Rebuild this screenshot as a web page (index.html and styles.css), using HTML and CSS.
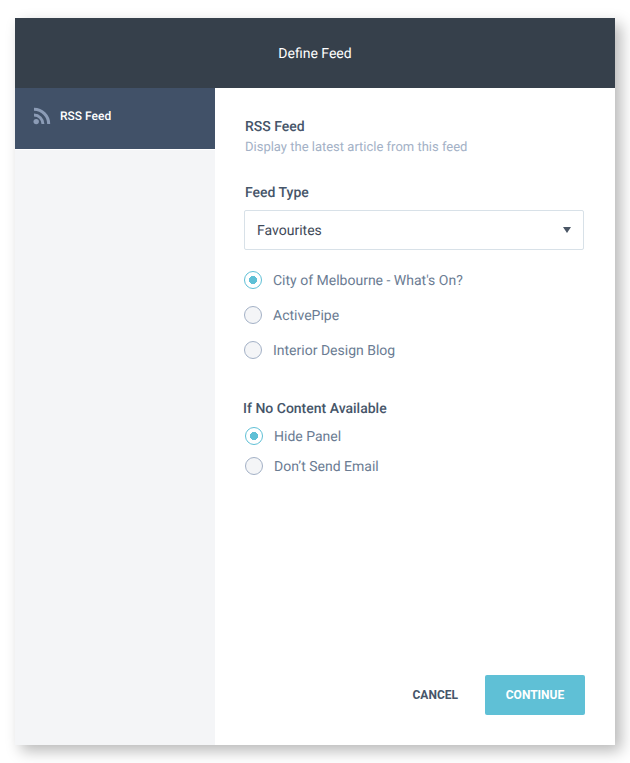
FILE: index.html
```html
<!DOCTYPE html>
<html lang="en">
<head>
<meta charset="utf-8">
<title>Define Feed</title>
<link rel="stylesheet" href="styles.css">
</head>
<body>
<div class="dialog">
  <header class="dialog-header">Define Feed</header>
  <div class="dialog-body">
    <aside class="sidebar">
      <div class="side-item">
        <svg class="rss-icon" width="18" height="18" viewBox="0 0 18 18" aria-hidden="true">
          <circle cx="3.2" cy="14.6" r="2.7" fill="#8c9cb6"/>
          <path d="M1 6.6a10.4 10.4 0 0 1 10.4 10.4h-2.9A7.5 7.5 0 0 0 1 9.5z" fill="#8c9cb6"/>
          <path d="M1 .8A16.2 16.2 0 0 1 17.2 17h-3A13.2 13.2 0 0 0 1 3.8z" fill="#8c9cb6"/>
        </svg>
        <span>RSS Feed</span>
      </div>
    </aside>
    <main class="content">
      <h2 class="title">RSS Feed</h2>
      <p class="subtitle">Display the latest article from this feed</p>
      <h3 class="label">Feed Type</h3>
      <div class="select"><span class="nudge">Favourites</span><i class="caret"></i></div>
      <div class="radios">
        <div class="radio-row"><i class="radio checked"></i><span class="nudge">City of Melbourne - What's On?</span></div>
        <div class="radio-row"><i class="radio"></i><span class="nudge">ActivePipe</span></div>
        <div class="radio-row"><i class="radio"></i><span class="nudge">Interior Design Blog</span></div>
      </div>
      <h3 class="label label-nocontent">If No Content Available</h3>
      <div class="radios-small">
        <div class="radio-row small"><i class="radio checked"></i><span class="nudge">Hide Panel</span></div>
        <div class="radio-row small"><i class="radio"></i><span class="nudge">Don’t Send Email</span></div>
      </div>
      <div class="actions">
        <button class="btn-cancel">CANCEL</button>
        <button class="btn-continue">CONTINUE</button>
      </div>
    </main>
  </div>
</div>
</body>
</html>
```
FILE: styles.css
```css
* { box-sizing: border-box; }
html, body { height: 100%; }
body {
  margin: 0;
  padding: 18px 15px 18px 15px;
  background: #fff;
  font-family: Roboto, "Liberation Sans", sans-serif;
  text-rendering: geometricPrecision;
  overflow: hidden;
}
.dialog {
  width: 600px;
  height: 727px;
  display: flex;
  flex-direction: column;
  background: #fff;
  box-shadow: 6px 6px 14px rgba(0, 0, 0, 0.28);
}
.dialog-header {
  height: 70px;
  padding-top: 2px;
  background: #36404b;
  color: #fff;
  display: flex;
  align-items: center;
  justify-content: center;
  font-size: 14px;
}
.dialog-body { flex: 1; display: flex; min-height: 0; }
.sidebar { width: 200px; background: #f4f5f7; }
.side-item {
  height: 61px;
  background: #415168;
  display: flex;
  align-items: center;
  padding: 0 0 5px 18px;
  gap: 9px;
  color: #fff;
  font-size: 12px;
  font-weight: 500;
  box-shadow: 0 1px 0 #fff;
}
.rss-icon { flex: none; }
.content {
  flex: 1;
  display: flex;
  flex-direction: column;
  padding: 31px 30px 30px 29px;
}
.title {
  margin: 0 0 0 1px;
  font-size: 14px;
  line-height: 17px;
  font-weight: 500;
  color: #465569;
}
.subtitle {
  margin: 4px 0 0 1px;
  font-size: 13px;
  line-height: 16px;
  color: #a3b1c6;
}
.label {
  margin: 29px 0 0 1px;
  font-size: 14px;
  line-height: 17px;
  font-weight: 500;
  color: #465569;
}
.select {
  margin-top: 8px;
  height: 40px;
  width: 340px;
  border: 1px solid #d8e1e8;
  border-radius: 2px;
  display: flex;
  align-items: center;
  justify-content: space-between;
  padding: 0 12px;
  font-size: 14px;
  color: #3f4a58;
}
.nudge { padding-top: 2px; }
.caret {
  width: 0;
  height: 0;
  border-left: 4.5px solid transparent;
  border-right: 4.5px solid transparent;
  border-top: 6px solid #4a5665;
}
.radios { margin-top: 21px; display: flex; flex-direction: column; gap: 17px; }
.radio-row {
  display: flex;
  align-items: center;
  gap: 11px;
  height: 18px;
  font-size: 14px;
  color: #6b7c93;
}
.radio {
  width: 18px;
  height: 18px;
  flex: none;
  border-radius: 50%;
  border: 1px solid #a3b1c6;
  background: #f4f5f7;
}
.radio.checked {
  border: 1px solid #5fc0d6;
  background: radial-gradient(circle, #5fc0d6 0, #5fc0d6 3.8px, #fff 4.3px);
}
.label-nocontent { margin: 42px 0 0 -1px; }
.radios-small { margin-top: 9px; display: flex; flex-direction: column; gap: 12px; }
.radio-row.small { padding-left: 1px; }
.actions {
  margin-top: auto;
  display: flex;
  align-items: center;
  justify-content: flex-end;
  gap: 27px;
}
.btn-cancel, .btn-continue {
  border: 0;
  padding: 0;
  font: 700 12px Roboto, "Liberation Sans", sans-serif;
  cursor: pointer;
}
.btn-cancel { background: none; color: #465569; }
.btn-continue {
  width: 100px;
  height: 40px;
  border-radius: 2px;
  background: #5fc0d6;
  color: #fff;
}
```
